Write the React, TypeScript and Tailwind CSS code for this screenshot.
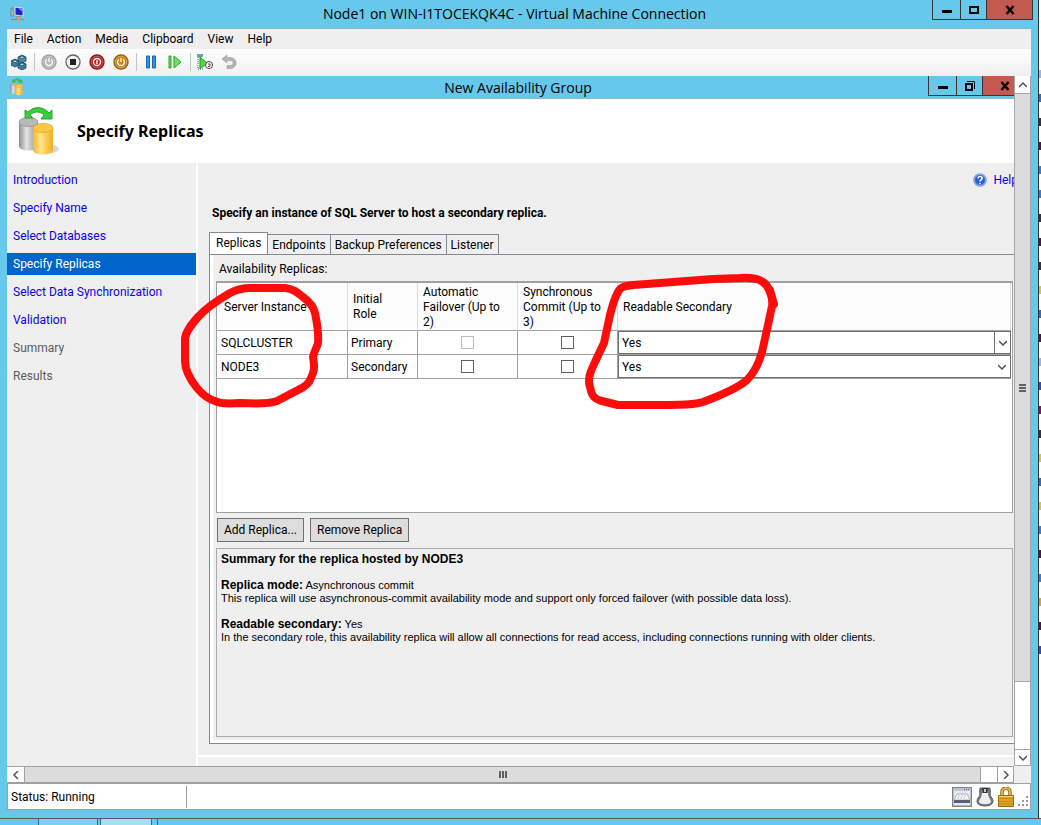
import { useState } from "react";
import type { ReactNode } from "react";

type Step = {
  label: string;
  state: "link" | "current" | "pending";
};

type Replica = {
  name: string;
  role: string;
  failoverLocked: boolean;
  split: boolean;
};

const menus = ["File", "Action", "Media", "Clipboard", "View", "Help"];

const steps: Step[] = [
  { label: "Introduction", state: "link" },
  { label: "Specify Name", state: "link" },
  { label: "Select Databases", state: "link" },
  { label: "Specify Replicas", state: "current" },
  { label: "Select Data Synchronization", state: "link" },
  { label: "Validation", state: "link" },
  { label: "Summary", state: "pending" },
  { label: "Results", state: "pending" },
];

const tabs = ["Replicas", "Endpoints", "Backup Preferences", "Listener"];

const replicas: Replica[] = [
  { name: "SQLCLUSTER", role: "Primary", failoverLocked: true, split: true },
  { name: "NODE3", role: "Secondary", failoverLocked: false, split: false },
];

// slivers of the window behind, one per text line
const slivers = [
  "bg-[#9db4dc]", "bg-[#2a6fb0]", "bg-[#333333]", "bg-[#5a1040]", "bg-[#2a7fd0]", "bg-[#2a7fd0]",
  "bg-[#333333]", "bg-[#5a1040]", "bg-[#333333]", "bg-[#d9c820]", "bg-[#2a6fb0]", "bg-[#5a1040]",
  "bg-[#9db4dc]", "bg-[#2a4fb0]", "bg-[#8a1060]", "bg-[#333333]", "bg-[#d9c820]", "bg-[#2a6fb0]",
  "bg-[#d9c820]", "bg-[#2a7fd0]", "bg-[#5a1040]", "bg-[#2a7fd0]", "bg-[#d9a820]", "bg-[#5a1040]",
  "bg-[#2a4fb0]",
];

const DatabaseIcon = ({ className }: { className: string }) => (
  <svg viewBox="0 0 42 50" className={className} aria-hidden="true">
    <defs>
      <linearGradient id="silver" x1="0" x2="1">
        <stop offset="0" stopColor="#8f8f8f" />
        <stop offset="0.4" stopColor="#e4e4e4" />
        <stop offset="1" stopColor="#8b8b8b" />
      </linearGradient>
      <linearGradient id="gold" x1="0" x2="1">
        <stop offset="0" stopColor="#f5b62c" />
        <stop offset="0.4" stopColor="#ffe58a" />
        <stop offset="1" stopColor="#f3ad1d" />
      </linearGradient>
    </defs>
    <ellipse cx="33" cy="43" rx="8" ry="4" fill="#bdbdbd" opacity="0.6" />
    <path d="M1 16v24c0 6 19 6 19 0V16z" fill="url(#silver)" />
    <ellipse cx="10.500" cy="16" rx="9.500" ry="4.500" fill="#b9b9b9" stroke="#8c8c8c" strokeWidth="0.700" />
    <path d="M15 22v22c0 6 20 6 20 0V22z" fill="url(#gold)" />
    <ellipse cx="25" cy="22" rx="10" ry="4.500" fill="#fbc845" stroke="#e5a31c" strokeWidth="0.700" />
    <path
      d="M7 4v8h8l-3-3c4-4 10-4 14 0l-3 4h11V4l-3 3C25 0 16 0 10 6z"
      fill="#3ccc3c"
      stroke="#1f9f2b"
      strokeWidth="0.900"
    />
  </svg>
);

const ConnectionIcon = () => (
  <svg viewBox="0 0 16 16" className="size-4" aria-hidden="true">
    <path d="M1 2h3v8H1z" fill="#aeb4b4" stroke="#6f7777" strokeWidth="0.700" />
    <path d="M1.500 4h1.500" stroke="#3fbf3f" />
    <path d="M5 1l8 1v8l-8-1z" fill="#1725c8" stroke="#dfe3f1" />
    <path d="M8 2l4 .5v3z" fill="#7f95ff" />
    <path d="M6 11l5-1v2H6zM1 13.500h13" stroke="#8d8d7f" fill="#ddd" />
    <path d="M7 12h3v3H7z" fill="#f09d25" />
  </svg>
);

const PowerIcon = ({ fill, ring, stopped }: { fill: string; ring: string; stopped?: boolean }) => (
  <svg viewBox="0 0 16 16" className="size-4" aria-hidden="true">
    <circle cx="8" cy="8" r="7" fill={fill} stroke={ring} strokeWidth="1.400" />
    <circle cx="8" cy="8" r="5.800" fill="none" stroke="#fff" strokeWidth="0.500" opacity="0.500" />
    {stopped ? (
      <g fill="none" stroke="#fff" strokeWidth="1.300">
        <circle cx="8" cy="8" r="3.500" />
        <path d="M8 6v4" />
      </g>
    ) : (
      <path d="M5.800 5.500a3.400 3.400 0 1 0 4.400 0M8 4v4" fill="none" stroke="#fff" strokeWidth="1.300" />
    )}
  </svg>
);

const CtrlAltDelIcon = () => (
  <svg viewBox="0 0 16 16" className="size-4" aria-hidden="true">
    <g stroke="#17495f" strokeWidth="0.800">
      <path d="M7 3l4-2 4 2v4l-4 2-4-2z" fill="#4d8da8" />
      <path d="M0 7l4-2 4 2v4l-4 2-4-2z" fill="#3f7d98" />
      <path d="M7 10l4-2 4 2v4l-4 2-4-2z" fill="#3f7d98" />
      <path d="M8 3l3-1 3 1-3 2zM1 7l3-1 3 1-3 2zM8 10l3-1 3 1-3 2z" fill="#b9dbe8" />
    </g>
  </svg>
);

const StopIcon = () => (
  <svg viewBox="0 0 16 16" className="size-4" aria-hidden="true">
    <circle cx="8" cy="8" r="7" fill="#f4f4f4" stroke="#666" strokeWidth="1.300" />
    <path d="M5 5h6v6H5z" fill="#222" />
  </svg>
);

const PauseIcon = () => (
  <svg viewBox="0 0 16 16" className="size-4" aria-hidden="true">
    <path d="M3.500 2h3v12h-3zM9.500 2h3v12h-3z" fill="#2e95e0" stroke="#1769ab" />
  </svg>
);

const StartIcon = () => (
  <svg viewBox="0 0 16 16" className="size-4" aria-hidden="true">
    <path d="M2 2h2v12H2zM7 2l7 6-7 6z" fill="#6fe05c" stroke="#26a52a" />
  </svg>
);

const SnapshotIcon = () => (
  <svg viewBox="0 0 16 16" className="size-4" aria-hidden="true">
    <path d="M.5.500h5v2h-5z" fill="#5fb5bd" stroke="#23727c" strokeWidth="0.600" />
    <path d="M1 3v12h5" fill="none" stroke="#23727c" strokeDasharray="1 1" />
    <circle cx="12" cy="11" r="3.500" fill="#fff" stroke="#444" />
    <path d="M12 9v2h2" stroke="#444" fill="none" />
    <path d="M11 12h2v1h-2z" fill="#d82020" />
    <path d="M3 3l7 6-7 6z" fill="#54d648" stroke="#1f9a28" />
  </svg>
);

const RevertIcon = () => (
  <svg viewBox="0 0 16 16" className="size-4" aria-hidden="true">
    <path d="M6 1L1 5l5 4V6.500h3c4 0 4 5 0 5H6v3h4c7-1 7-11-1-11H6z" fill="#b5b5b5" stroke="#9b9b9b" strokeWidth="0.600" />
  </svg>
);

const Chevron = ({ d }: { d: string }) => (
  <svg viewBox="0 0 8 8" className="size-2" aria-hidden="true">
    <path d={d} fill="none" stroke="#505050" strokeWidth="1.500" />
  </svg>
);

const tools: { label: string; icon: ReactNode; divider?: boolean }[] = [
  { label: "Ctrl+Alt+Delete", icon: <CtrlAltDelIcon />, divider: true },
  { label: "Start", icon: <PowerIcon fill="#b4b4b4" ring="#a2a2a2" /> },
  { label: "Turn Off", icon: <StopIcon /> },
  { label: "Shut Down", icon: <PowerIcon fill="#b8201b" ring="#8c1a17" stopped /> },
  { label: "Save", icon: <PowerIcon fill="#cf8412" ring="#94600f" />, divider: true },
  { label: "Pause", icon: <PauseIcon /> },
  { label: "Reset", icon: <StartIcon />, divider: true },
  { label: "Checkpoint", icon: <SnapshotIcon /> },
  { label: "Revert", icon: <RevertIcon /> },
];

const WindowControls = ({ restore, closeClass }: { restore?: boolean; closeClass: string }) => (
  <div className="flex h-5 shrink-0 self-start border-b border-l border-[#3a3434]">
    <button aria-label="Minimize" className="flex w-7 items-center justify-center border-r border-[#3a3434] pt-1">
      <span className="h-[3px] w-[10px] bg-black" />
    </button>
    <button
      aria-label={restore ? "Restore" : "Maximize"}
      className="flex w-[26px] items-center justify-center border-r border-[#3a3434]"
    >
      <svg viewBox="0 0 10 10" className="size-[10px]" aria-hidden="true">
        {restore ? (
          <>
            <path d="M1 3h6v6H1z" fill="none" stroke="#000" strokeWidth="2" />
            <path d="M2 .5h7.500V8" fill="none" stroke="#000" />
          </>
        ) : (
          <path d="M1 2h8v6H1z" fill="none" stroke="#000" strokeWidth="2" />
        )}
      </svg>
    </button>
    <button aria-label="Close" className={`flex items-center bg-[#c4594f] ${closeClass}`}>
      <svg viewBox="0 0 10 10" className="size-[10px]" aria-hidden="true">
        <path d="M1.500 1l7 8M8.500 1l-7 8" stroke="#000" strokeWidth="2.400" />
      </svg>
    </button>
  </div>
);

const HeadCell = ({ children, className = "px-[5px]" }: { children: ReactNode; className?: string }) => (
  <th className={`border-r border-b border-r-[#dcdcdc] border-b-[#a0a0a0] pt-px text-left font-normal ${className}`}>
    {children}
  </th>
);

const cell = "h-6 border-r border-b border-[#a0a0a0] px-[3px]";

const ReplicaRow = ({ replica }: { replica: Replica }) => (
  <tr>
    <td className="h-6 border-r border-b border-[#a0a0a0] px-1">{replica.name}</td>
    <td className={cell}>{replica.role}</td>
    <td className={cell}>
      <input
        type="checkbox"
        aria-label={`Automatic failover for ${replica.name}`}
        disabled={replica.failoverLocked}
        className="mx-auto block size-[13px] appearance-none border border-[#606060] bg-white checked:bg-[#606060] disabled:border-[#bcbcbc]"
      />
    </td>
    <td className={cell}>
      <input
        type="checkbox"
        aria-label={`Synchronous commit for ${replica.name}`}
        className="mx-auto block size-[13px] appearance-none border border-[#606060] bg-white checked:bg-[#606060]"
      />
    </td>
    <td className="h-6 border-b border-[#a0a0a0]">
      <div className="relative h-[23px] border border-[#707070] bg-white">
        <select
          aria-label={`Readable secondary for ${replica.name}`}
          defaultValue="Yes"
          className="h-full w-full appearance-none pl-[3px]"
        >
          <option>Yes</option>
          <option>No</option>
          <option>Read-intent only</option>
        </select>
        <span
          className={`pointer-events-none absolute inset-y-0 right-0 flex w-4 items-center justify-center ${
            replica.split ? "border-l border-[#707070]" : ""
          }`}
        >
          <Chevron d="M0 2l4 4 4-4" />
        </span>
      </div>
    </td>
  </tr>
);

const ReplicasPanel = () => (
  <div className="flex flex-1 flex-col border-b border-l border-[#828790] bg-white pb-[3px] pl-[3px]">
    <div className="flex flex-1 flex-col bg-[#efefef] pr-px pb-[3px] pl-[3px]">
      <p className="pt-[6px] pb-1 pl-[3px] leading-4">Availability Replicas:</p>

      <div className="h-[232px] border border-t-2 border-[#a0a0a0] bg-white pr-px">
        <table className="w-full table-fixed border-separate border-spacing-0">
          <colgroup>
            <col className="w-[131px]" />
            <col className="w-[70px]" />
            <col className="w-[100px]" />
            <col className="w-[100px]" />
            <col />
          </colgroup>
          <thead>
            <tr className="h-12 bg-[#fcfcfc] leading-[15px]">
              <HeadCell className="pr-[5px] pl-[7px]">Server Instance</HeadCell>
              <HeadCell>Initial<br />Role</HeadCell>
              <HeadCell>Automatic<br />Failover (Up to<br />2)</HeadCell>
              <HeadCell>Synchronous<br />Commit (Up to<br />3)</HeadCell>
              <HeadCell>Readable Secondary</HeadCell>
            </tr>
          </thead>
          <tbody>
            {replicas.map(r => (
              <ReplicaRow key={r.name} replica={r} />
            ))}
          </tbody>
        </table>
      </div>

      <div className="flex gap-[6px] py-[5px] pl-px">
        <button className="h-6 border border-[#707070] bg-[#dddddd] px-[6px]">Add Replica...</button>
        <button className="h-6 border border-[#707070] bg-[#dddddd] px-[6px]">Remove Replica</button>
      </div>

      <div className="mt-px flex-1 border border-[#a9abb3] pt-1 pl-1 font-['Liberation_Sans',Arial,sans-serif] text-[11px] leading-[13px]">
        <h2 className="text-[12px] font-bold">Summary for the replica hosted by NODE3</h2>
        <p className="mt-[13px]">
          <b className="text-[12px]">Replica mode:</b> Asynchronous commit
        </p>
        <p>
          This replica will use asynchronous-commit availability mode and support only forced failover (with possible
          data loss).
        </p>
        <p className="mt-[13px]">
          <b className="text-[12px]">Readable secondary:</b> Yes
        </p>
        <p>
          In the secondary role, this availability replica will allow all connections for read access, including
          connections running with older clients.
        </p>
      </div>
    </div>
  </div>
);

const Wizard = () => {
  const [tab, setTab] = useState("Replicas");

  return (
    <div className="flex min-w-0 flex-1 flex-col overflow-hidden bg-[#efefef]">
      <div className="flex h-[23px] shrink-0 border-b border-[#8fb4c4] bg-[#66c8ea]">
        <div className="flex w-[86px] items-center pl-[3px]">
          <DatabaseIcon className="h-[18px] w-[15px]" />
        </div>
        <h2 className="flex-1 pl-[15px] text-center font-['Open_Sans',sans-serif] text-[14px] leading-[23px]">
          New Availability Group
        </h2>
        <WindowControls restore closeClass="w-[31px] justify-end pr-1" />
      </div>

      <header className="flex h-16 shrink-0 items-center bg-white pl-[11px]">
        <DatabaseIcon className="h-[50px] w-[42px]" />
        <h1 className="pl-[17px] font-['Noto_Sans',sans-serif] text-[16px] font-bold">Specify Replicas</h1>
      </header>

      <div className="flex flex-1">
        <nav className="w-[191px] shrink-0 border-r-2 border-white pt-[6px]">
          {steps.map(s =>
            s.state === "pending" ? (
              <span key={s.label} className="mb-[6px] block pl-[6px] leading-[22px] text-[#5c5c5c]">
                {s.label}
              </span>
            ) : (
              <a
                key={s.label}
                href="#"
                className={`mb-[6px] block pl-[6px] leading-[22px] ${
                  s.state === "current" ? "bg-[#0066cc] text-white" : "text-[#0a00f0]"
                }`}
              >
                {s.label}
              </a>
            )
          )}
        </nav>

        <main className="flex min-w-0 flex-1 flex-col">
          <div className="-mr-1 flex h-[34px] items-center justify-end gap-[6px]">
            <svg viewBox="0 0 14 14" className="size-[14px]" aria-hidden="true">
              <circle cx="7" cy="7" r="6.300" fill="#2460d8" stroke="#8ea4c8" />
              <circle cx="7" cy="7" r="5.500" fill="none" stroke="#cfe0fa" strokeWidth="0.600" />
              <path d="M5 5.500c0-3 4.200-2.500 4.200-.3C9.200 6.700 7 6.500 7 8.500M7 9.800v1.400" fill="none" stroke="#fff" strokeWidth="1.500" />
            </svg>
            <a href="#" className="text-[#0a00f0]">Help</a>
          </div>

          <p className="pt-2 pl-[14px] font-bold leading-4">Specify an instance of SQL Server to host a secondary replica.</p>

          <div className="flex flex-1 flex-col pt-[11px] pl-[11px]">
            <div role="tablist" className="flex items-end">
              {tabs.map(t => (
                <button
                  key={t}
                  role="tab"
                  aria-selected={t === tab}
                  onClick={() => setTab(t)}
                  className={
                    t === tab
                      ? "-mb-px h-[23px] border border-b-0 border-[#828790] bg-white px-[6px] pb-[2px] leading-4"
                      : "h-5 border border-b-0 border-l-0 border-[#828790] px-1 leading-4"
                  }
                >
                  {t}
                </button>
              ))}
            </div>
            <div className="flex flex-1 flex-col border-t border-[#828790]">
              <ReplicasPanel />
            </div>
          </div>

          <div className="mt-[11px] h-[11px] border-t-2 border-white bg-[#f2f2f2]" />
        </main>
      </div>
    </div>
  );
};

const VerticalScrollbar = () => (
  <div className="flex w-[17px] shrink-0 flex-col border-x border-[#a6a6a6] bg-white">
    <button aria-label="Scroll up" className="flex h-[17px] items-center justify-center">
      <Chevron d="M0 6l4-4 4 4" />
    </button>
    <div className="flex flex-1 flex-col pb-[67px]">
      <div className="flex flex-1 flex-col items-center justify-center gap-px border-y border-[#a6a6a6] bg-[#dcdcdc]">
        <span className="h-[2px] w-[7px] bg-[#606060]" />
        <span className="h-[2px] w-[7px] bg-[#606060]" />
        <span className="h-[2px] w-[7px] bg-[#606060]" />
      </div>
    </div>
    <button aria-label="Scroll down" className="flex h-[17px] items-center justify-center border-y border-[#a6a6a6]">
      <Chevron d="M0 2l4 4 4-4" />
    </button>
  </div>
);

const HorizontalScrollbar = () => (
  <div className="flex h-[17px] shrink-0 bg-[#efefef] pr-[17px]">
    <div className="flex flex-1 border-y border-[#a0a0a0] bg-white">
      <button aria-label="Scroll left" className="flex w-[17px] items-center justify-center">
        <Chevron d="M6 0L2 4l4 4" />
      </button>
      <div className="flex flex-1 items-center justify-center gap-px border-x border-[#a0a0a0] bg-[#dcdcdc]">
        <span className="h-[7px] w-[2px] bg-[#606060]" />
        <span className="h-[7px] w-[2px] bg-[#606060]" />
        <span className="h-[7px] w-[2px] bg-[#606060]" />
      </div>
      <div className="w-4" />
      <button aria-label="Scroll right" className="flex w-[17px] items-center justify-center border-x border-[#a0a0a0]">
        <Chevron d="M2 0l4 4-4 4" />
      </button>
    </div>
  </div>
);

const StatusBar = () => (
  <footer className="flex h-[27px] shrink-0 items-center border border-[#a0a0a0] bg-white">
    <span className="w-[178px] pl-[3px]">Status: Running</span>
    <span className="h-[22px] w-px bg-[#a0a0a0]" />
    <div className="flex flex-1 items-center justify-end gap-1 pr-px">
      <svg viewBox="0 0 20 20" className="size-5" aria-hidden="true">
        <path d="M.7.700h18.600v18.600H.7z" fill="#e6e9ee" stroke="#7f858c" strokeWidth="1.400" />
        <path d="M1.500 1.500h17V4h-17z" fill="#c3c9d2" />
        <path d="M12 2.500h6" stroke="#606a78" strokeDasharray="1 1" />
        <path d="M5 7h10l3 6H2z" fill="#fbfcfd" stroke="#9aa3af" strokeWidth="0.800" />
        <path d="M5 11h10M6 9h8" stroke="#b4bbc5" strokeDasharray="2 1" />
        <path d="M2 13h16v3H2z" fill="#59636f" />
      </svg>
      <svg viewBox="0 0 18 20" className="h-5 w-[18px]" aria-hidden="true">
        <path d="M4 1c-1 4 1 7-2 10-3 5 1 8 7 8s10-3 7-8c-3-3-1-6-2-10z" fill="#74797d" stroke="#5d6266" />
        <path d="M6 6c0 5-3 6-3 9 1 3 11 3 12 0 0-3-3-4-3-9z" fill="#edf0f2" />
        <path d="M6 1h6l-1 5H7z" fill="#303437" />
        <path d="M9 2v3" stroke="#fff" strokeWidth="1.500" />
      </svg>
      <svg viewBox="0 0 16 20" className="h-5 w-4" aria-hidden="true">
        <path d="M4 9V5c0-5 8-5 8 0v4" fill="none" stroke="#8d671a" strokeWidth="3.500" />
        <path d="M4 9V5c0-5 8-5 8 0v4" fill="none" stroke="#e6b84d" strokeWidth="1.800" />
        <path d="M.5 8.500h15v11H.5z" fill="#dfa326" stroke="#9a6c12" />
        <path d="M1 11.500h14M1 14.500h14M1 17h14" stroke="#b57b12" strokeWidth="0.600" />
        <path d="M1 9.500h14" stroke="#f7d377" />
      </svg>
      <svg viewBox="0 0 11 11" className="size-[11px] self-end" aria-hidden="true">
        <path d="M8 0h2v2H8zM4 4h2v2H4zM8 4h2v2H8zM0 8h2v2H0zM4 8h2v2H4zM8 8h2v2H8z" fill="#999" />
      </svg>
    </div>
  </footer>
);

// hand-drawn marker loops on top of the grid
const MarkerLoops = () => (
  <svg
    viewBox="180 270 600 140"
    className="pointer-events-none absolute top-[270px] left-[180px] h-[140px] w-[600px]"
    aria-hidden="true"
  >
    <g fill="none" stroke="#fb0d0b" strokeWidth="8" strokeLinecap="round" strokeLinejoin="round">
      <path d="M230 293C238 289 242 288 250 288H285C294 289 298 293 303 297C311 303 314 308 315 313C317 323 319 332 318 343C317 348 314 351 313 357C315 368 314 372 311 378C309 384 305 387 298 390L277 401C265 405 252 403 240 403C228 404 220 404 215 401C208 399 202 394 197 388C189 378 185 370 185 361V338C186 331 191 325 198 317C207 307 218 300 230 293Z" />
      <path d="M618 292C621 286 626 286 633 285L660 283L713 279L740 278C754 277 763 280 767 286C771 293 773 300 772 306L768 325L762 352C759 363 755 372 747 380C738 388 719 396 703 402C690 406 678 404 667 405H618L602 401C592 399 591 392 590 387C588 381 589 376 591 371L595 362L604 343L610 315C612 307 614 299 618 292Z" />
      <path d="M770 290L774 304" />
    </g>
  </svg>
);

export default function App() {
  return (
    <div className="relative flex min-h-screen flex-col overflow-hidden bg-[#66c8ea] font-[Roboto,'Open_Sans',sans-serif] text-[12px] text-black">
      <div className="flex flex-1">
        <div className="flex min-w-0 flex-1 flex-col border-r border-[#30353a]">
          <div className="flex h-7 shrink-0 pr-[5px]">
            <div className="flex w-[97px] items-center pl-[10px]">
              <ConnectionIcon />
            </div>
            <h1 className="flex-1 text-center font-['Open_Sans',sans-serif] text-[14px] leading-7">
              Node1 on WIN-I1TOCEKQK4C - Virtual Machine Connection
            </h1>
            <WindowControls closeClass="w-[46px] justify-center border-r border-[#3a3434]" />
          </div>

          <div className="mx-[7px] mb-2 flex flex-1 flex-col border-t border-[#8fb4c4]">
            <div className="flex h-5 shrink-0 gap-[14px] bg-[#efefef] pl-[7px]">
              {menus.map(m => (
                <button key={m}>{m}</button>
              ))}
            </div>

            <div className="flex h-[27px] shrink-0 items-center gap-2 bg-linear-to-b from-white to-[#efefef] pb-px pl-1">
              {tools.map(t => (
                <div key={t.label} className="flex items-center gap-[7px]">
                  <button aria-label={t.label}>{t.icon}</button>
                  {t.divider && <span className="-mr-[2px] h-[18px] w-px bg-[#c4c4c4]" />}
                </div>
              ))}
            </div>

            <div className="flex flex-1">
              <Wizard />
              <VerticalScrollbar />
            </div>
            <HorizontalScrollbar />
            <StatusBar />
          </div>
        </div>

        <div className="flex w-[2px] shrink-0 flex-col gap-4 bg-white pt-[70px]">
          {slivers.map((color, i) => (
            <span key={i} className={`h-2 ${color}`} />
          ))}
        </div>
      </div>

      <div className="flex h-[7px] shrink-0 border-t border-[#52585c] pl-[38px]">
        <span className="w-[60px] border-x border-[#3c6a7c] bg-[#7fd0ec]" />
        <span className="ml-[2px] w-[52px] border-x border-[#3c6a7c] bg-[#a5dff3]" />
        <span className="ml-[2px] w-1 border-r border-[#3c6a7c]" />
      </div>

      <MarkerLoops />
    </div>
  );
}
